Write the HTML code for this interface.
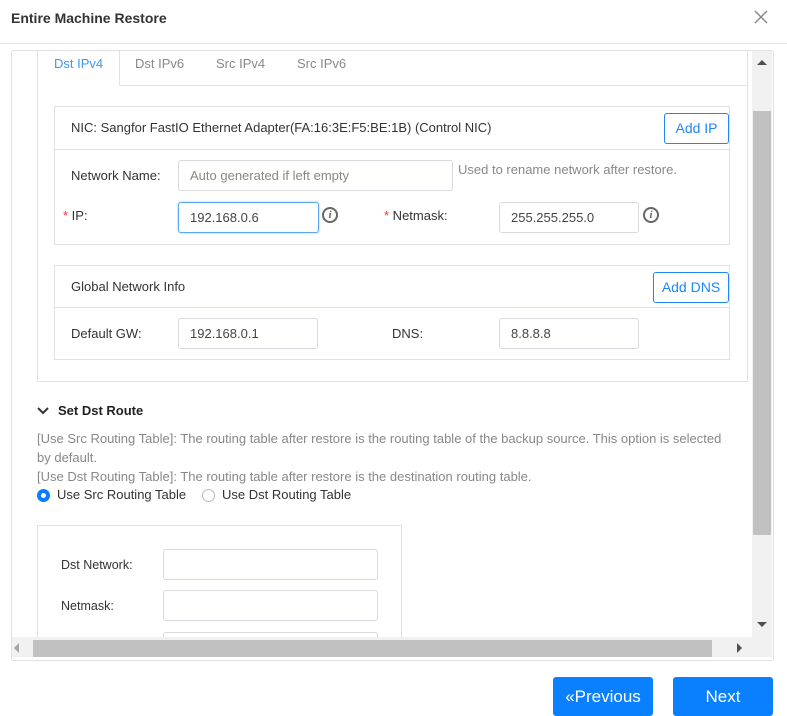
<!DOCTYPE html>
<html><head><meta charset="utf-8"><style>
*{box-sizing:border-box;margin:0;padding:0}
body{width:787px;height:716px;overflow:hidden;background:#fff;font-family:"Liberation Sans",Arial,sans-serif;color:#333;position:relative;font-size:13px}
.a{position:absolute}
.t{position:absolute;white-space:nowrap;line-height:16px}
.inp{position:absolute;border:1px solid #d6d9de;border-radius:3px;background:#fff;height:31px;padding-left:11px;line-height:29px;font-size:13px;color:#444}
.btn{position:absolute;border:1px solid #1f86f5;border-radius:3px;color:#1f86f5;text-align:center;line-height:28px;font-size:14px;background:#fff}
.info{position:absolute;width:16px;height:16px;border:2px solid #666;border-radius:50%;font:italic bold 11px "Liberation Serif",serif;color:#666;text-align:center;line-height:12px}
.bb{position:absolute;background:#0a80ff;color:#fff;border-radius:3px;font-size:17px;text-align:center;line-height:39px;height:39px;width:100px;top:677px}
</style></head><body>
<div class="t" style="left:11px;top:10px;font-size:14px;font-weight:bold;color:#333">Entire Machine Restore</div>
<svg class="a" style="left:754px;top:10px" width="14" height="14"><path d="M1 1L13 13M13 1L1 13" stroke="#888" stroke-width="1.5"/></svg>
<div class="a" style="left:0;top:43px;width:787px;height:1px;background:#e3e3e3"></div>

<div class="a" style="left:11px;top:50px;width:763px;height:611px;border:1px solid #dfe1e5;border-radius:3px;overflow:hidden">
</div>
<!-- inner box -->
<div class="a" style="left:37px;top:50px;width:711px;height:332px;border:1px solid #dfe1e5;border-top:none"></div>
<div class="a" style="left:119px;top:50px;width:1px;height:36px;background:#dfe1e5"></div>
<div class="a" style="left:119px;top:85px;width:628px;height:1px;background:#dfe1e5"></div>
<div class="t" style="left:54px;top:56px;color:#3d97f5">Dst IPv4</div>
<div class="t" style="left:135px;top:56px;color:#888">Dst IPv6</div>
<div class="t" style="left:216px;top:56px;color:#888">Src IPv4</div>
<div class="t" style="left:297px;top:56px;color:#888">Src IPv6</div>

<div class="a" style="left:54px;top:106px;width:676px;height:139px;border:1px solid #dfe1e5"></div>
<div class="a" style="left:55px;top:149px;width:674px;height:1px;background:#dfe1e5"></div>
<div class="t" style="left:71px;top:120px;color:#333">NIC: Sangfor FastIO Ethernet Adapter(FA:16:3E:F5:BE:1B) (Control NIC)</div>
<div class="btn" style="left:664px;top:113px;width:65px;height:31px">Add IP</div>
<div class="t" style="left:71px;top:168px">Network Name:</div>
<div class="inp" style="left:178px;top:160px;width:275px;color:#888">Auto generated if left empty</div>
<div class="t" style="left:458px;top:162px;color:#888">Used to rename network after restore.</div>
<div class="t" style="left:63px;top:208px"><span style="color:#e33">*</span> IP:</div>
<div class="inp" style="left:178px;top:202px;width:141px;border-color:#5aa6f5;box-shadow:0 0 2px #9cc8f5">192.168.0.6</div>
<div class="info" style="left:322px;top:207px">i</div>
<div class="t" style="left:384px;top:208px"><span style="color:#e33">*</span> Netmask:</div>
<div class="inp" style="left:499px;top:202px;width:140px">255.255.255.0</div>
<div class="info" style="left:643px;top:207px">i</div>

<div class="a" style="left:54px;top:265px;width:676px;height:95px;border:1px solid #dfe1e5"></div>
<div class="a" style="left:55px;top:307px;width:674px;height:1px;background:#dfe1e5"></div>
<div class="t" style="left:71px;top:279px">Global Network Info</div>
<div class="btn" style="left:653px;top:272px;width:76px;height:31px">Add DNS</div>
<div class="t" style="left:71px;top:326px">Default GW:</div>
<div class="inp" style="left:178px;top:318px;width:140px">192.168.0.1</div>
<div class="t" style="left:392px;top:326px">DNS:</div>
<div class="inp" style="left:499px;top:318px;width:140px">8.8.8.8</div>

<svg class="a" style="left:37px;top:406px" width="12" height="10"><path d="M1 2L6 7L11 2" stroke="#333" stroke-width="2" fill="none"/></svg>
<div class="t" style="left:58px;top:403px;font-weight:bold;color:#222">Set Dst Route</div>
<div class="a" style="left:37px;top:429px;width:700px;line-height:19px;color:#888;font-size:13px">[Use Src Routing Table]: The routing table after restore is the routing table of the backup source. This option is selected by default.<br>[Use Dst Routing Table]: The routing table after restore is the destination routing table.</div>
<div class="a" style="left:37px;top:489px;width:13px;height:13px;border-radius:50%;border:4px solid #0a7cff;background:#fff"></div>
<div class="t" style="left:57px;top:487px">Use Src Routing Table</div>
<div class="a" style="left:202px;top:489px;width:13px;height:13px;border-radius:50%;border:1px solid #bbb"></div>
<div class="t" style="left:222px;top:487px">Use Dst Routing Table</div>

<div class="a" style="left:37px;top:525px;width:365px;height:112px;border:1px solid #dfe1e5;border-bottom:none"></div>
<div class="t" style="left:61px;top:557px;font-size:12.5px">Dst Network:</div>
<div class="inp" style="left:163px;top:549px;width:215px"></div>
<div class="t" style="left:61px;top:598px;font-size:12.5px">Netmask:</div>
<div class="inp" style="left:163px;top:590px;width:215px"></div>
<div class="inp" style="left:163px;top:632px;width:215px;height:5px;border-bottom:none;border-radius:3px 3px 0 0"></div>

<!-- scrollbars -->
<div class="a" style="left:752px;top:51px;width:20px;height:586px;background:#f1f1f1"></div>
<div class="a" style="left:753px;top:111px;width:18px;height:424px;background:#c1c1c1"></div>
<svg class="a" style="left:757px;top:59px" width="10" height="6"><path d="M0 6L5 1L10 6Z" fill="#505050"/></svg>
<svg class="a" style="left:757px;top:622px" width="10" height="6"><path d="M0 0L5 5L10 0Z" fill="#505050"/></svg>
<div class="a" style="left:12px;top:637px;width:760px;height:20px;background:#f1f1f1"></div>
<div class="a" style="left:33px;top:640px;width:679px;height:17px;background:#c1c1c1"></div>
<svg class="a" style="left:13px;top:643px" width="6" height="10"><path d="M6 0L1 5L6 10Z" fill="#a3a3a3"/></svg>
<svg class="a" style="left:737px;top:643px" width="6" height="10"><path d="M0 0L5 5L0 10Z" fill="#505050"/></svg>

<div class="bb" style="left:553px">«Previous</div>
<div class="bb" style="left:673px">Next</div>
</body></html>
